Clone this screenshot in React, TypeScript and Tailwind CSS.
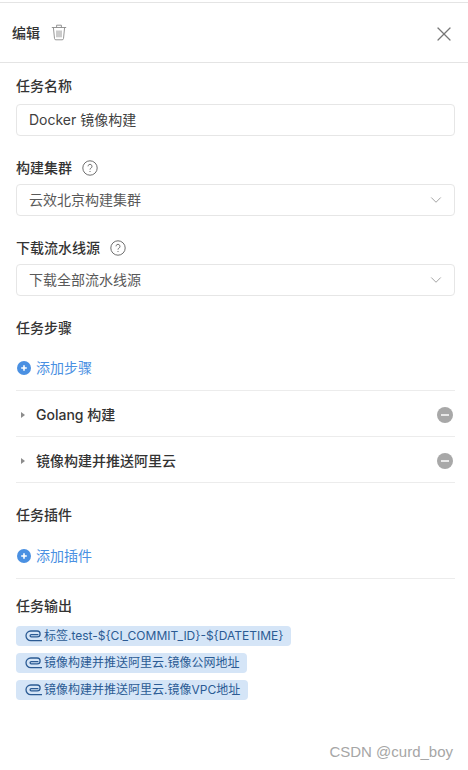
import { ChevronDown, X } from 'lucide-react'

const FONT = { fontFamily: 'Inter, "Noto Sans CJK SC", sans-serif' }

function TrashIcon() {
  return (
    <svg width="16" height="17" viewBox="0 0 16 17" fill="none" stroke="#8a8a8a" strokeWidth="0.9">
      <path d="M0.8 3.5h14.4" />
      <path d="M5.6 3.5V1.2h4.8v2.3" />
      <path d="M2.4 3.5l1.1 11a1.4 1.4 0 0 0 1.4 1.3h6.2a1.4 1.4 0 0 0 1.4-1.3l1.1-11" />
      <path d="M6 6.5v6.8M8 6.5v6.8M10 6.5v6.8" />
    </svg>
  )
}

function HelpIcon() {
  return (
    <svg width="16" height="16" viewBox="0 0 16 16" fill="none" stroke="#6f6f6f" strokeWidth="1">
      <circle cx="8" cy="8" r="7.2" />
      <path d="M6 6.3a2 2 0 1 1 3.1 1.7c-.7.4-1.1.8-1.1 1.6" />
      <path d="M8 11v1" />
    </svg>
  )
}

function PlusCircle() {
  return (
    <svg width="14" height="14" viewBox="0 0 14 14">
      <circle cx="7" cy="7" r="7" fill="#4a90e2" />
      <path d="M7 4.2v5.6M4.2 7h5.6" stroke="#ffffff" strokeWidth="1.6" />
    </svg>
  )
}

function LinkIcon() {
  return (
    <svg width="18" height="12" viewBox="0 0 18 12" fill="none" stroke="#2b5b94" strokeWidth="1.3">
      <path d="M17 10.6H5.8a4.8 4.8 0 0 1 0-9.6h6.4a2.9 2.9 0 0 1 0 5.8H6.2a1.1 1.1 0 0 1 0-2.2h7.2" />
    </svg>
  )
}

function Label({ text, help }: { text: string; help?: boolean }) {
  return (
    <div className="flex h-5 items-center gap-[10px] text-sm font-medium text-[#333333]">
      <span>{text}</span>
      {help ? <HelpIcon /> : null}
    </div>
  )
}

function Select({ value }: { value: string }) {
  return (
    <div className="mt-[6px] flex h-8 items-center justify-between rounded border border-[#e6e6e6] pl-3 pr-[9px] text-sm text-[#595959]">
      <span>{value}</span>
      <ChevronDown className="h-[18px] w-[18px] text-[#9a9a9a]" strokeWidth={1.2} />
    </div>
  )
}

function AddLink({ text }: { text: string }) {
  return (
    <div className="flex h-5 items-center gap-[5px] pl-[1px] text-sm text-[#4a90e2]">
      <PlusCircle />
      <span>{text}</span>
    </div>
  )
}

function StepRow({ name }: { name: string }) {
  return (
    <div className="flex h-[46px] items-center justify-between border-b border-[#ececec] pl-[5px] pr-[2px] pt-[2px]">
      <div className="flex items-center gap-[11px] text-sm font-medium text-[#333333]">
        <span className="h-0 w-0 border-y-[3.5px] border-l-[4px] border-y-transparent border-l-[#8c8c8c]" />
        <span>{name}</span>
      </div>
      <span className="flex h-4 w-4 items-center justify-center rounded-full bg-[#a8a8a8]">
        <span className="h-[2px] w-2 bg-[#e8e8e8]" />
      </span>
    </div>
  )
}

function OutputTag({ text }: { text: string }) {
  return (
    <div className="flex h-5 w-fit items-center gap-[1px] rounded bg-[#d5e5f7] pl-[9px] pr-2 text-xs text-[#2b5b94]">
      <LinkIcon />
      <span>{text}</span>
    </div>
  )
}

export default function App() {
  return (
    <div className="relative h-[770px] w-[468px] overflow-hidden bg-white" style={FONT}>
      <div className="mt-[2px] flex h-[61px] items-center justify-between border-y border-[#e4e4e4] pl-3 pr-[12px]">
        <div className="flex items-center gap-[11px]">
          <span className="text-sm font-medium text-[#333333]">编辑</span>
          <TrashIcon />
        </div>
        <X className="mt-[2px] h-6 w-6 text-[#777777]" strokeWidth={1.2} />
      </div>

      <div className="pl-4 pr-[13px] pt-[13px]">
        <Label text="任务名称" />
        <div className="mt-2 flex h-8 items-center rounded border border-[#e6e6e6] px-3 text-sm text-[#404040]">
          Docker 镜像构建
        </div>

        <div className="mt-[22px]">
          <Label text="构建集群" help />
          <Select value="云效北京构建集群" />
        </div>

        <div className="mt-[22px]">
          <Label text="下载流水线源" help />
          <Select value="下载全部流水线源" />
        </div>

        <div className="mt-[22px]">
          <Label text="任务步骤" />
        </div>
        <div className="mt-[20px] border-b border-[#ececec] pb-[12px]">
          <AddLink text="添加步骤" />
        </div>
        <StepRow name="Golang 构建" />
        <StepRow name="镜像构建并推送阿里云" />

        <div className="mt-[22px]">
          <Label text="任务插件" />
        </div>
        <div className="mt-[21px] border-b border-[#ececec] pb-[12px]">
          <AddLink text="添加插件" />
        </div>

        <div className="mt-[17px]">
          <Label text="任务输出" />
        </div>
        <div className="mt-[10px] flex flex-col gap-[7px]">
          <OutputTag text="标签.test-${CI_COMMIT_ID}-${DATETIME}" />
          <OutputTag text="镜像构建并推送阿里云.镜像公网地址" />
          <OutputTag text="镜像构建并推送阿里云.镜像VPC地址" />
        </div>
      </div>

      <div className="absolute bottom-[7px] right-[15px] text-[15px] text-[#a6a6a6] [font-family:'Liberation_Sans',sans-serif]">
        CSDN @curd_boy
      </div>
    </div>
  )
}
